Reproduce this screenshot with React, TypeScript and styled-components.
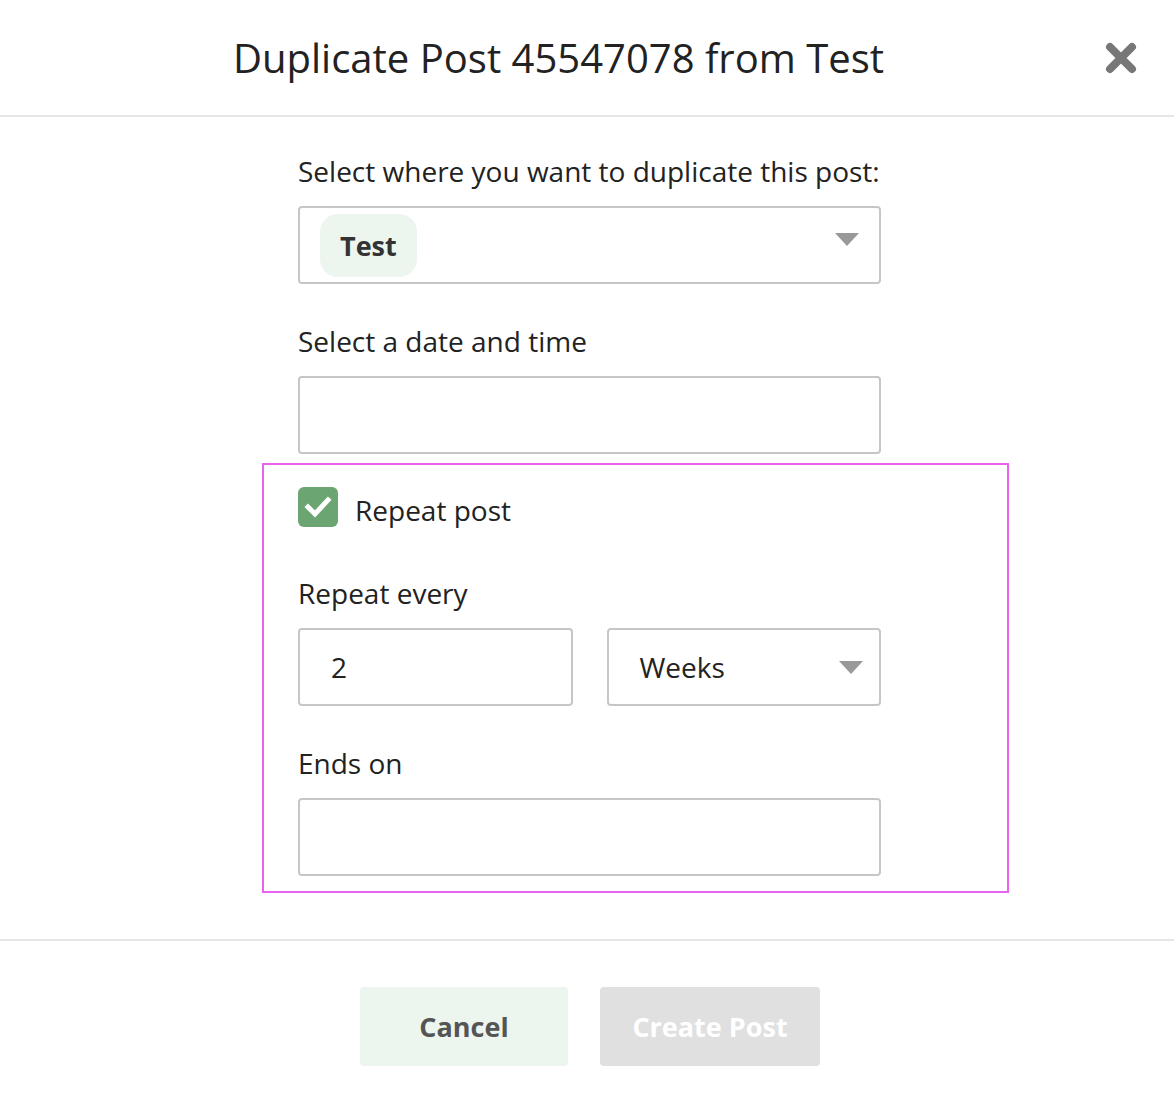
import React, { useState } from 'react';
import styled, { createGlobalStyle } from 'styled-components';

const GlobalStyle = createGlobalStyle`
  html, body {
    margin: 0;
    padding: 0;
    background: #fff;
  }
  body {
    font-family: 'Open Sans', 'Noto Sans', sans-serif;
    color: #222;
  }
  * {
    box-sizing: border-box;
  }
`;

const Modal = styled.div`
  width: 1174px;
  min-height: 1106px;
  background: #fff;
  display: flex;
  flex-direction: column;
`;

const Header = styled.header`
  height: 117px;
  padding-right: 57px;
  border-bottom: 2px solid #e6e6e6;
  display: flex;
  align-items: center;
  justify-content: center;
  position: relative;
`;

const Title = styled.h1`
  margin: 0;
  font-size: 40px;
  font-weight: 400;
  color: #222;
  letter-spacing: 0;
`;

const CloseButton = styled.button`
  position: absolute;
  right: 36px;
  top: 41px;
  width: 34px;
  height: 34px;
  padding: 0;
  border: none;
  background: none;
  cursor: pointer;
  display: flex;
  align-items: center;
  justify-content: center;
`;

const Body = styled.div`
  width: 588px;
  margin: 0 auto;
  padding: 34px 0 46px 5px;
  display: flex;
  flex-direction: column;
`;

const Label = styled.label<{ $top?: number }>`
  display: block;
  font-size: 28px;
  line-height: 40px;
  margin-top: ${p => p.$top ?? 0}px;
  margin-bottom: 15px;
  color: #222;
`;

const Field = styled.div<{ $flex?: boolean }>`
  position: relative;
  height: 78px;
  border: 2px solid #c6c6c6;
  border-radius: 4px;
  background: #fff;
  display: flex;
  align-items: center;
  padding: 0 31px;
  font-size: 28px;
  color: #222;
  ${p => (p.$flex ? 'flex: 1;' : '')}
`;

const MultiField = styled(Field)`
  padding: 0 20px;
`;

const Chip = styled.span`
  display: inline-flex;
  align-items: center;
  height: 63px;
  padding: 0 20px;
  border-radius: 18px;
  background: #edf5ef;
  font-weight: 700;
  font-size: 27px;
  color: #333;
`;

const Caret = styled.span<{ $top?: number; $right: number }>`
  position: absolute;
  right: ${p => p.$right}px;
  ${p => (p.$top !== undefined ? `top: ${p.$top}px;` : 'top: 50%; margin-top: -6px;')}
  width: 0;
  height: 0;
  border-left: 12px solid transparent;
  border-right: 12px solid transparent;
  border-top: 13px solid #999;
`;

const RepeatSection = styled.section`
  margin: 9px -128px 0 -36px;
  padding: 22px 126px 15px 34px;
  border: 2px solid #e862ef;
`;

const CheckRow = styled.label`
  display: flex;
  align-items: flex-start;
  height: 40px;
  gap: 17px;
  font-size: 28px;
  line-height: 46px;
  cursor: pointer;
`;

const CheckBox = styled.span<{ $checked: boolean }>`
  flex: none;
  width: 40px;
  height: 40px;
  border-radius: 6px;
  background: ${p => (p.$checked ? '#6ba572' : '#fff')};
  border: ${p => (p.$checked ? 'none' : '2px solid #c6c6c6')};
  display: flex;
  align-items: center;
  justify-content: center;
`;

const Row = styled.div`
  display: flex;
  gap: 34px;
`;

const Footer = styled.footer`
  border-top: 2px solid #e6e6e6;
  padding: 46px 0 40px 6px;
  display: flex;
  justify-content: center;
  gap: 32px;
`;

const Button = styled.button<{ $variant: 'secondary' | 'disabled' }>`
  height: 79px;
  padding: 0;
  width: ${p => (p.$variant === 'secondary' ? 208 : 220)}px;
  border: none;
  border-radius: 4px;
  font-family: inherit;
  font-size: 27px;
  font-weight: 700;
  background: ${p => (p.$variant === 'secondary' ? '#edf5ef' : '#e0e0e0')};
  color: ${p => (p.$variant === 'secondary' ? '#555' : '#fff')};
  cursor: ${p => (p.$variant === 'disabled' ? 'default' : 'pointer')};
`;

const CloseIcon = () => (
  <svg width="34" height="34" viewBox="0 0 34 34">
    <path
      d="M6 6 L28 28 M28 6 L6 28"
      stroke="#777"
      strokeWidth="8"
      strokeLinecap="round"
    />
  </svg>
);

const CheckIcon = () => (
  <svg width="30" height="30" viewBox="0 0 30 30">
    <path
      d="M5 15 L12 22 L25 8"
      fill="none"
      stroke="#fff"
      strokeWidth="5"
      strokeLinecap="square"
    />
  </svg>
);

export default function App() {
  const [repeat, setRepeat] = useState(true);

  return (
    <Modal>
      <GlobalStyle />
      <Header>
        <Title>Duplicate Post 45547078 from Test</Title>
        <CloseButton aria-label="Close">
          <CloseIcon />
        </CloseButton>
      </Header>

      <Body>
        <Label>Select where you want to duplicate this post:</Label>
        <MultiField>
          <Chip>Test</Chip>
          <Caret $top={25} $right={20} />
        </MultiField>

        <Label $top={37}>Select a date and time</Label>
        <Field />

        <RepeatSection>
          <CheckRow onClick={() => setRepeat(r => !r)}>
            <CheckBox $checked={repeat}>{repeat && <CheckIcon />}</CheckBox>
            <span>Repeat post</span>
          </CheckRow>

          <Label $top={46}>Repeat every</Label>
          <Row>
            <Field $flex>2</Field>
            <Field $flex>
              Weeks
              <Caret $right={16} />
            </Field>
          </Row>

          <Label $top={37}>Ends on</Label>
          <Field />
        </RepeatSection>
      </Body>

      <Footer>
        <Button $variant="secondary">Cancel</Button>
        <Button $variant="disabled">Create Post</Button>
      </Footer>
    </Modal>
  );
}
